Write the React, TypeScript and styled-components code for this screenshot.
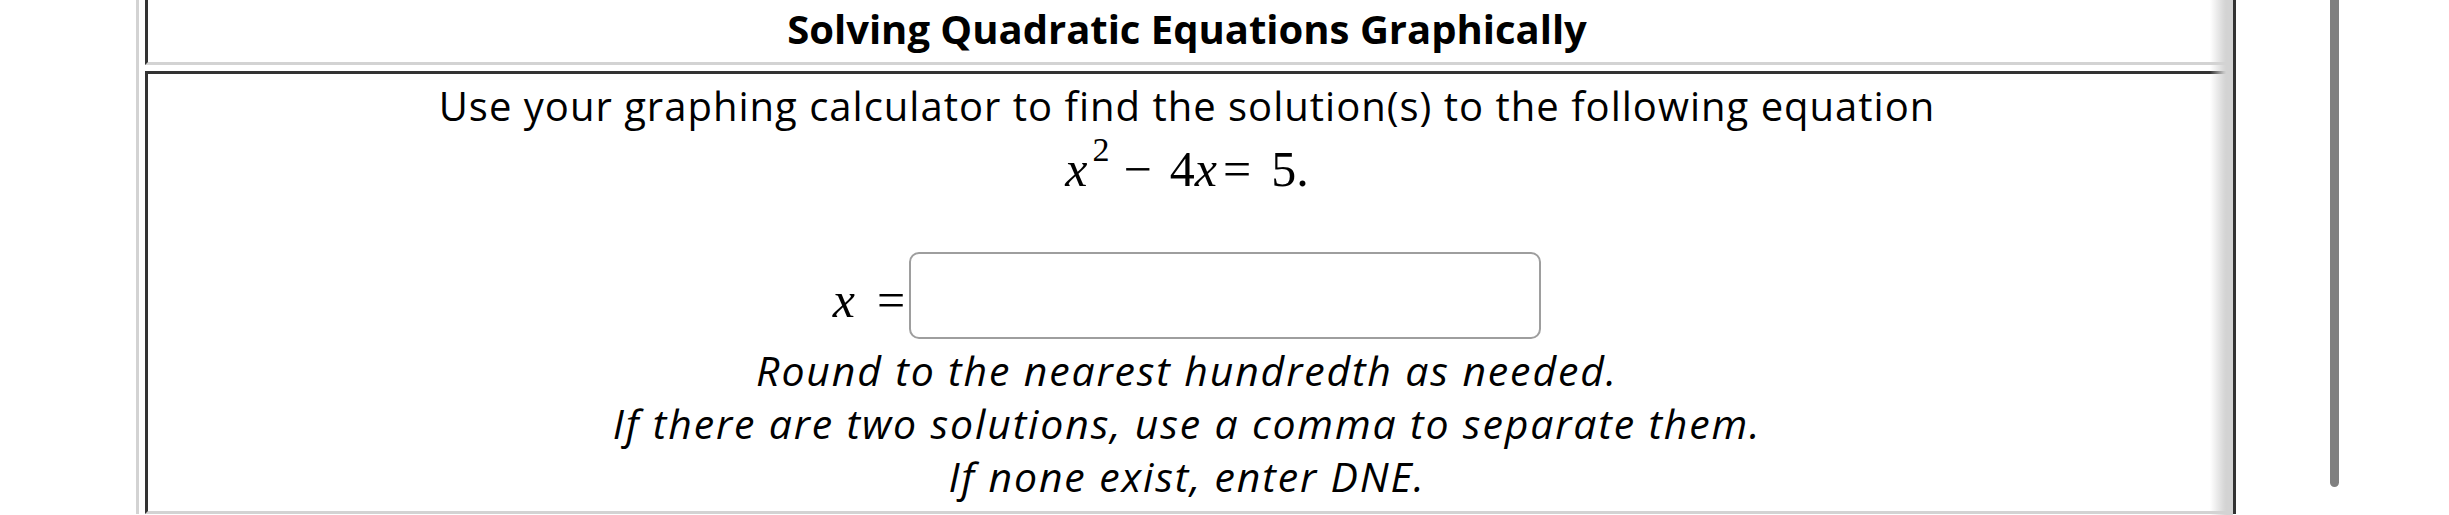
import React from "react";
import styled, { createGlobalStyle } from "styled-components";

const GlobalStyle = createGlobalStyle`
  html, body {
    margin: 0;
    padding: 0;
    background: #ffffff;
    overflow: hidden;
  }
  body {
    font-family: "Open Sans", "Noto Sans", sans-serif;
    font-variant-ligatures: none;
    color: #000;
  }
`;

const Page = styled.div`
  position: relative;
  width: 2449px;
  height: 515px;
  padding-left: 136px;
  box-sizing: border-box;
`;

const OuterTable = styled.div`
  position: relative;
  width: 2100px;
  box-sizing: border-box;
  border-left: 3px solid #d3d3d3;
  border-right: 3px solid #333333;
  padding: 0 4px 0 6px;
  display: flex;
  flex-direction: column;
  gap: 6px;
`;

const RightFade = styled.div`
  position: absolute;
  top: 0;
  right: 0;
  width: 23px;
  height: 515px;
  pointer-events: none;
  background: linear-gradient(
    to right,
    rgba(211, 211, 211, 0) 0%,
    rgba(211, 211, 211, 0.9) 60%,
    #d3d3d3 70%
  );
`;

const HeaderCell = styled.div`
  box-sizing: border-box;
  border-left: 3px solid #333333;
  border-right: 3px solid #d3d3d3;
  border-bottom: 3px solid #d3d3d3;
  height: 65px;
  display: flex;
  justify-content: center;
  align-items: flex-end;
  padding-bottom: 5px;
`;

const Title = styled.h1`
  margin: 0;
  font-family: "Open Sans", "Noto Sans", sans-serif;
  font-weight: 700;
  font-size: 40px;
  line-height: 56px;
  white-space: nowrap;
`;

const ContentCell = styled.div`
  box-sizing: border-box;
  border-style: solid;
  border-width: 3px;
  border-color: #333333 #d3d3d3 #d3d3d3 #333333;
  height: 443px;
  padding-top: 5px;
  display: flex;
  flex-direction: column;
  align-items: center;
`;

const Prompt = styled.p`
  margin: 0;
  font-size: 40px;
  letter-spacing: 1px;
  line-height: 54px;
  white-space: nowrap;
`;

const MathLine = styled.div`
  margin-top: 6px;
  font-family: "Liberation Serif", "Times New Roman", serif;
  font-size: 50px;
  line-height: 60px;
  white-space: nowrap;
`;

const MathVar = styled.span`
  font-style: italic;
`;

const Sup = styled.sup`
  font-size: 34px;
  line-height: 0;
  vertical-align: 25px;
  margin-left: 5px;
`;

const Op = styled.span<{ $l: number; $r: number }>`
  margin-left: ${(p) => p.$l}px;
  margin-right: ${(p) => p.$r}px;
`;

const AnswerRow = styled.div`
  margin-top: 53px;
  display: flex;
  align-items: center;
`;

const AnswerLabel = styled.span`
  font-family: "Liberation Serif", "Times New Roman", serif;
  font-size: 50px;
  line-height: 60px;
  padding-top: 8px;
  white-space: nowrap;
`;

const AnswerInput = styled.input`
  box-sizing: border-box;
  width: 632px;
  height: 87px;
  border: 2px solid #9e9e9e;
  border-radius: 10px;
  background: #ffffff;
  outline: none;
  margin: 0;
  padding: 0 12px;
  font-family: "Open Sans", sans-serif;
  font-size: 36px;
`;

const Notes = styled.div`
  margin-top: 5px;
  display: flex;
  flex-direction: column;
  align-items: center;
`;

const Note = styled.p`
  margin: 0;
  font-style: italic;
  font-size: 41px;
  letter-spacing: 1.85px;
  line-height: 53px;
  white-space: nowrap;
`;

const ScrollThumb = styled.div`
  position: absolute;
  left: 2330px;
  top: -20px;
  width: 9px;
  height: 507px;
  border-radius: 5px;
  background: #808080;
`;

export default function App() {
  return (
    <>
      <GlobalStyle />
      <Page>
        <OuterTable>
          <HeaderCell>
            <Title>Solving Quadratic Equations Graphically</Title>
          </HeaderCell>
          <ContentCell>
            <Prompt>
              Use your graphing calculator to find the solution(s) to the following equation
            </Prompt>
            <MathLine>
              <MathVar>x</MathVar>
              <Sup>2</Sup>
              <Op $l={14} $r={18}>−</Op>
              4<MathVar>x</MathVar>
              <Op $l={6} $r={20}>=</Op>
              5.
            </MathLine>
            <AnswerRow>
              <AnswerLabel>
                <MathVar>x</MathVar>
                <Op $l={22} $r={4}>=</Op>
              </AnswerLabel>
              <AnswerInput type="text" aria-label="x" />
            </AnswerRow>
            <Notes>
              <Note>Round to the nearest hundredth as needed.</Note>
              <Note>If there are two solutions, use a comma to separate them.</Note>
              <Note>If none exist, enter DNE.</Note>
            </Notes>
          </ContentCell>
          <RightFade />
        </OuterTable>
        <ScrollThumb />
      </Page>
    </>
  );
}
